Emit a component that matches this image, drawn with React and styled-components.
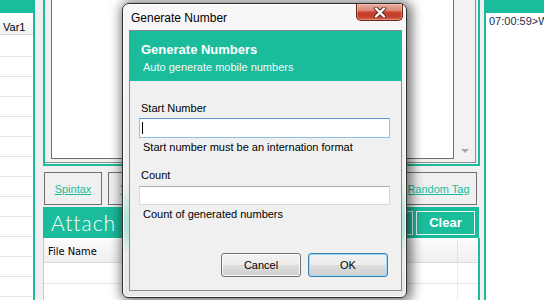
import React from "react";
import styled, { createGlobalStyle } from "styled-components";

const TEAL = "#1abc9c";

const GlobalStyle = createGlobalStyle`
    html, body {
        margin: 0;
        padding: 0;
        background: #f0f0f0;
    }
    body {
        font-family: "Liberation Sans", Arial, sans-serif;
    }
    #root {
        width: 544px;
        height: 300px;
        overflow: hidden;
        position: relative;
    }
`;

const leftRows = [21, 19, 19, 19, 19, 19, 19, 19, 19, 19, 19, 19, 19];
const tools = [
    { label: "Spintax", width: 58 },
    { label: "Variables", width: 70 },
    { label: "Unsubscribe", width: 70 },
    { label: "Personal Tag", width: 70 },
    { label: "Date Tag", width: 58 },
    { label: "Random Tag", width: 77 },
];

function App() {
    return (
        <>
            <GlobalStyle />
            <Page>
                <LeftPanel>
                    <PanelHead />
                    <GridHead>Var1</GridHead>
                    {leftRows.map((h, i) => (
                        <GridRow key={i} $h={h} />
                    ))}
                </LeftPanel>

                <MainColumn>
                    <TopGroup>
                        <InnerBox>
                            <MessageBox />
                            <ScrollBar>
                                <ArrowDown />
                            </ScrollBar>
                        </InnerBox>
                    </TopGroup>

                    <ToolRow>
                        {tools.map((t) => (
                            <ToolButton key={t.label} $w={t.width}>
                                <span>{t.label}</span>
                            </ToolButton>
                        ))}
                    </ToolRow>

                    <AttachBar>
                        <AttachTitle>Attach Files</AttachTitle>
                        <BarButtons>
                            <BarButton>Add</BarButton>
                            <BarButton>Clear</BarButton>
                        </BarButtons>
                    </AttachBar>

                    <FileTable>
                        <TableHead>
                            <HeadCell>File Name</HeadCell>
                            <HeadCell $narrow />
                        </TableHead>
                        <TableRow>
                            <RowCell />
                            <RowCell $narrow />
                        </TableRow>
                        <TableRow>
                            <RowCell />
                            <RowCell $narrow />
                        </TableRow>
                    </FileTable>
                </MainColumn>

                <RightPanel>
                    <PanelHead />
                    <LogLine>07:00:59&gt;Wait</LogLine>
                </RightPanel>

                <Dialog>
                    <TitleBar>
                        <TitleText>Generate Number</TitleText>
                        <CloseButton>
                            <svg width="16" height="11" viewBox="0 0 16 11">
                                <path
                                    d="M4 1.5 L12 9.5 M12 1.5 L4 9.5"
                                    stroke="#5a2a22"
                                    strokeWidth="4.2"
                                    strokeLinecap="round"
                                    fill="none"
                                />
                                <path
                                    d="M4 1.5 L12 9.5 M12 1.5 L4 9.5"
                                    stroke="#ffffff"
                                    strokeWidth="2.4"
                                    strokeLinecap="round"
                                    fill="none"
                                />
                            </svg>
                        </CloseButton>
                    </TitleBar>
                    <Client>
                        <ClientHeader>
                            <HeaderTitle>Generate Numbers</HeaderTitle>
                            <HeaderSub>Auto generate mobile numbers</HeaderSub>
                        </ClientHeader>
                        <FormBody>
                            <FieldLabel $top={21}>Start Number</FieldLabel>
                            <Field $focused $top={3} $h={20}>
                                <Caret />
                            </Field>
                            <Hint $top={3}>
                                Start number must be an internation format
                            </Hint>
                            <FieldLabel $top={15}>Count</FieldLabel>
                            <Field $top={4} $h={19} />
                            <Hint $top={3}>Count of generated numbers</Hint>
                        </FormBody>
                        <Footer>
                            <DialogButton>Cancel</DialogButton>
                            <DialogButton $default>OK</DialogButton>
                        </Footer>
                    </Client>
                </Dialog>
            </Page>
        </>
    );
}

export default App;

const Page = styled.div`
    display: flex;
    height: 300px;
    position: relative;
    background: #f0f0f0;
`;

const LeftPanel = styled.div`
    width: 33px;
    flex-shrink: 0;
    background: #fff;
    border-right: 2px solid ${TEAL};
    display: flex;
    flex-direction: column;
    overflow: hidden;
`;

const PanelHead = styled.div`
    height: 13px;
    background: ${TEAL};
    flex-shrink: 0;
`;

const GridHead = styled.div`
    height: 21px;
    box-sizing: content-box;
    padding-left: 3px;
    line-height: 28px;
    font-size: 11px;
    color: #000;
    background: linear-gradient(#ffffff, #f1f2f4);
    border-bottom: 1px solid #d5d5d5;
    flex-shrink: 0;
`;

const GridRow = styled.div`
    height: ${(p) => p.$h}px;
    margin-right: 1px;
    border-bottom: 1px solid #e4e4e4;
    flex-shrink: 0;
`;

const MainColumn = styled.div`
    width: 437px;
    flex-shrink: 0;
    margin: 0 4px 0 8px;
    display: flex;
    flex-direction: column;
`;

const TopGroup = styled.div`
    height: 166px;
    box-sizing: border-box;
    border: 2px solid ${TEAL};
    border-top: 0;
    padding: 0 2px 1px 0;
    display: flex;
    flex-shrink: 0;
`;

const InnerBox = styled.div`
    flex: 1;
    display: flex;
    padding: 0 0 3px 6px;
    border-right: 1px solid #8c8c8c;
    border-bottom: 1px solid #8c8c8c;
`;

const MessageBox = styled.div`
    flex: 1;
    background: #fff;
    border: 1px solid #6e6e6e;
    border-top: 0;
`;

const ScrollBar = styled.div`
    width: 21px;
    background: #f2f2f2;
    display: flex;
    align-items: flex-end;
    justify-content: center;
    padding-bottom: 6px;
`;

const ArrowDown = styled.div`
    width: 0;
    height: 0;
    border-left: 4px solid transparent;
    border-right: 4px solid transparent;
    border-top: 4px solid #a8a8a8;
`;

const ToolRow = styled.div`
    display: flex;
    gap: 6px;
    margin-top: 6px;
    padding-left: 1px;
    height: 33px;
    flex-shrink: 0;
`;

const ToolButton = styled.div`
    width: ${(p) => p.$w}px;
    box-sizing: border-box;
    border: 1px solid #707070;
    background: #f0f0f0;
    display: flex;
    align-items: center;
    justify-content: center;
    font-size: 11px;
    color: ${TEAL};
    text-decoration: underline;
    white-space: nowrap;
`;

const AttachBar = styled.div`
    margin-top: 2px;
    margin-right: 1px;
    height: 31px;
    background: ${TEAL};
    display: flex;
    align-items: center;
    justify-content: space-between;
    padding: 0 4px 0 8px;
    flex-shrink: 0;
`;

const AttachTitle = styled.div`
    font-family: "Lato", "DejaVu Sans", sans-serif;
    font-weight: 300;
    font-size: 21px;
    letter-spacing: 1px;
    color: #fff;
    margin-top: -1px;
`;

const BarButtons = styled.div`
    display: flex;
    gap: 3px;
`;

const BarButton = styled.div`
    width: 59px;
    height: 24px;
    box-sizing: border-box;
    border: 1px solid rgba(255, 255, 255, 0.9);
    color: #fff;
    font-weight: bold;
    font-size: 13px;
    display: flex;
    align-items: center;
    justify-content: center;
`;

const FileTable = styled.div`
    flex: 1;
    background: #fff;
    border-left: 1px solid #c8c8c8;
    border-right: 2px solid ${TEAL};
    padding-top: 2px;
`;

const TableHead = styled.div`
    display: flex;
    height: 22px;
    background: linear-gradient(#fbfbfb, #f0f0f0);
    border-bottom: 1px solid #dcdcdc;
`;

const HeadCell = styled.div`
    flex: ${(p) => (p.$narrow ? "0 0 16px" : "1")};
    border-right: ${(p) => (p.$narrow ? "0" : "1px solid #e2e2e2")};
    padding: 2px 0 0 4px;
    font-family: "Liberation Sans Narrow", "DejaVu Sans Condensed", "Liberation Sans", sans-serif;
    font-stretch: condensed;
    font-size: 11px;
    line-height: 20px;
    color: #000;
`;

const TableRow = styled.div`
    display: flex;
    height: 20px;
    border-bottom: 1px solid #e6e6e6;
`;

const RowCell = styled.div`
    flex: ${(p) => (p.$narrow ? "0 0 16px" : "1")};
    border-right: ${(p) => (p.$narrow ? "0" : "1px solid #ececec")};
    padding-left: 4px;
`;

const RightPanel = styled.div`
    flex: 1;
    background: #fff;
    border-left: 2px solid ${TEAL};
    overflow: hidden;
`;

const LogLine = styled.div`
    padding: 2px 0 0 3px;
    font-size: 11px;
    line-height: 13px;
    color: #1c2d4d;
    white-space: nowrap;
    overflow: hidden;
`;

const Dialog = styled.div`
    position: absolute;
    left: 122px;
    top: 3px;
    width: 285px;
    height: 295px;
    box-sizing: border-box;
    border: 1px solid #2f2f2f;
    border-radius: 7px 7px 6px 6px;
    background: linear-gradient(
        180deg,
        #f8f8f8 0px,
        #eeeeee 180px,
        #b9e6dc 212px,
        #b9e6dc 228px,
        #ebebeb 250px,
        #e9e9e9 100%
    );
    box-shadow: inset 0 0 0 1px rgba(255, 255, 255, 0.85),
        2px 1px 12px 3px rgba(0, 0, 0, 0.55);
    display: flex;
    flex-direction: column;
`;

const TitleBar = styled.div`
    height: 26px;
    flex-shrink: 0;
    display: flex;
    align-items: center;
    justify-content: space-between;
    padding-left: 8px;
    padding-right: 3px;
`;

const TitleText = styled.div`
    font-size: 12px;
    color: #000;
    margin-top: 1px;
`;

const CloseButton = styled.div`
    align-self: flex-start;
    width: 47px;
    height: 17px;
    box-sizing: border-box;
    border: 1px solid #6b2419;
    border-top: 0;
    border-radius: 0 0 5px 5px;
    background: linear-gradient(
        180deg,
        #eab0a2 0%,
        #dc8672 40%,
        #c8432d 52%,
        #c23c27 75%,
        #d4684d 100%
    );
    box-shadow: inset 0 0 0 1px rgba(255, 220, 210, 0.35);
    display: flex;
    align-items: center;
    justify-content: center;
`;

const Client = styled.div`
    flex: 1;
    margin: 0 4px 6px 6px;
    border: 1px solid #8a8a8a;
    background: #f0f0f0;
    display: flex;
    flex-direction: column;
`;

const ClientHeader = styled.div`
    height: 50px;
    box-sizing: border-box;
    background: ${TEAL};
    padding: 11px 0 0 11px;
    color: #fff;
`;

const HeaderTitle = styled.div`
    font-size: 13px;
    font-weight: bold;
    line-height: 16px;
`;

const HeaderSub = styled.div`
    font-size: 11px;
    line-height: 13px;
    margin-top: 3px;
    padding-left: 2px;
    color: #f2fbf9;
`;

const FormBody = styled.div`
    padding: 0 11px 0 9px;
    display: flex;
    flex-direction: column;
`;

const FieldLabel = styled.div`
    margin-top: ${(p) => p.$top}px;
    padding-left: 2px;
    font-size: 11px;
    line-height: 13px;
    color: #000;
`;

const Field = styled.div`
    margin-top: ${(p) => p.$top}px;
    height: ${(p) => p.$h}px;
    box-sizing: border-box;
    background: #fff;
    border: 1px solid ${(p) => (p.$focused ? "#8fbfe8" : "#d6d9de")};
    border-top-color: ${(p) => (p.$focused ? "#5b9bd1" : "#abadb3")};
    display: flex;
    align-items: center;
    padding-left: 2px;
`;

const Caret = styled.div`
    width: 1px;
    height: 12px;
    background: #000;
`;

const Hint = styled.div`
    margin-top: ${(p) => p.$top}px;
    padding-left: 4px;
    font-size: 11px;
    line-height: 13px;
    color: #000;
`;

const Footer = styled.div`
    margin-top: auto;
    display: flex;
    justify-content: flex-end;
    gap: 7px;
    padding: 0 13px 13px 0;
`;

const DialogButton = styled.div`
    width: 80px;
    height: 24px;
    box-sizing: border-box;
    border: 1px solid ${(p) => (p.$default ? "#3c7fb1" : "#707070")};
    border-radius: 3px;
    background: linear-gradient(
        180deg,
        #f3f3f3 0%,
        #ebebeb 50%,
        #dddddd 51%,
        #cfcfcf 100%
    );
    box-shadow: inset 0 0 0 1px
        ${(p) => (p.$default ? "#9fd9fa" : "rgba(255,255,255,0.75)")};
    font-size: 11px;
    color: #000;
    display: flex;
    align-items: center;
    justify-content: center;
`;
